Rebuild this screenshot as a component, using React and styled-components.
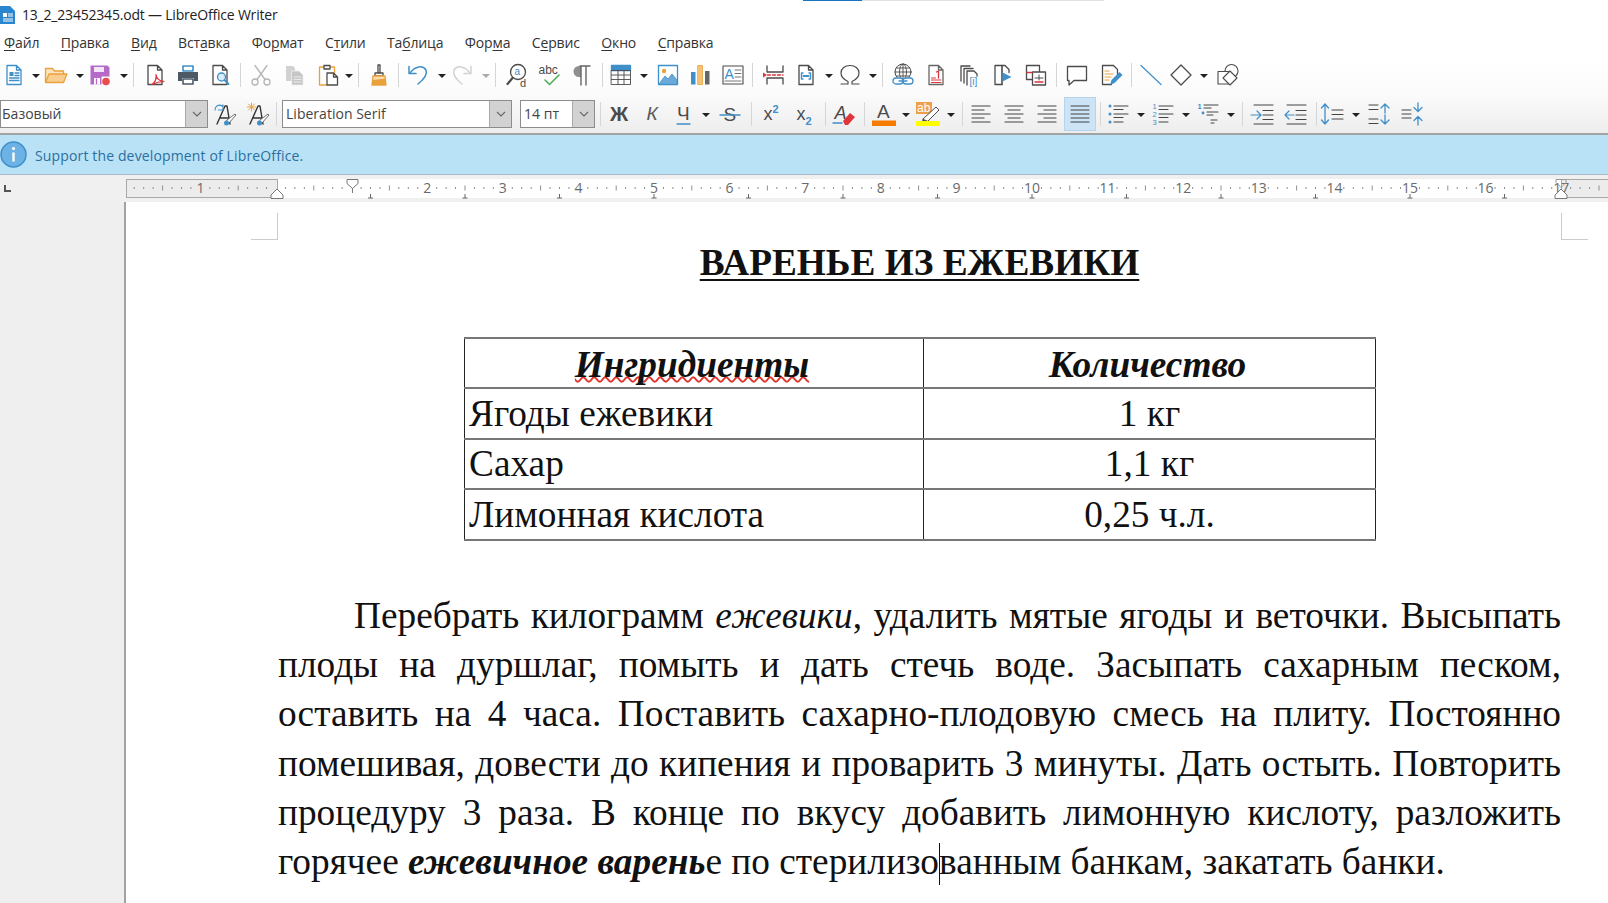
import React from "react";
import styled, { createGlobalStyle } from "styled-components";

const BLUE = "#3f8fc8";
const ORANGE = "#e9a23b";
const DARK = "#4b4b4b";
const RED = "#d9363e";

const GlobalStyle = createGlobalStyle`
  html, body {
    margin: 0;
    padding: 0;
    width: 1608px;
    height: 903px;
    overflow: hidden;
    background: #fff;
  }
`;

const Window = styled.div`
  width: 1608px;
  height: 903px;
  display: flex;
  flex-direction: column;
  overflow: hidden;
  font-family: "Open Sans", "Noto Sans", sans-serif;
  color: #333;
`;

const TopProgress = styled.div`
  height: 1px;
  display: flex;
  padding-left: 803px;
  flex-shrink: 0;
`;

const ProgressPart = styled.div`
  height: 1px;
  width: ${(p) => p.$w}px;
  background: ${(p) => p.$c};
`;

const TitleBar = styled.div`
  height: 28px;
  display: flex;
  align-items: center;
  gap: 7px;
  font-size: 14px;
  letter-spacing: -0.2px;
  color: #222;
  flex-shrink: 0;
  padding-bottom: 1px;
  box-sizing: border-box;
`;

const MenuBar = styled.div`
  height: 28px;
  display: flex;
  align-items: center;
  padding: 0 0 2px 4px;
  box-sizing: border-box;
  gap: 21.5px;
  font-size: 14px;
  letter-spacing: -0.15px;
  color: #333;
  flex-shrink: 0;
  background: #fff;
`;

const MenuItem = styled.span`
  u { text-underline-offset: 2px; text-decoration-thickness: 1px; }
`;

const ToolRow = styled.div`
  height: ${(p) => p.$h}px;
  padding-bottom: ${(p) => p.$pb || 0}px;
  box-sizing: border-box;
  display: flex;
  align-items: center;
  flex-shrink: 0;
  background: linear-gradient(${(p) => p.$from}, ${(p) => p.$to});
`;

const Toolbars = styled.div`
  border-bottom: 2px solid #a3a3a3;
  flex-shrink: 0;
`;

const Tool = styled.div`
  width: 24px;
  height: 24px;
  flex-shrink: 0;
  margin-left: ${(p) => p.$gap}px;
  display: flex;
  align-items: center;
  justify-content: center;
  svg { display: block; }
`;

const ActiveTool = styled(Tool)`
  width: 32px;
  height: 34px;
  background: #cde4f7;
  border: 1px solid #b5d5ee;
  box-sizing: border-box;
`;

const Drop = styled.div`
  width: 0;
  height: 0;
  flex-shrink: 0;
  margin-left: ${(p) => p.$gap}px;
  margin-top: 2px;
  border-left: 4px solid transparent;
  border-right: 4px solid transparent;
  border-top: 4px solid ${(p) => (p.$off ? "#aaa" : "#222")};
`;

const Sep = styled.div`
  width: 1px;
  height: 24px;
  flex-shrink: 0;
  margin-left: ${(p) => p.$gap}px;
  background: #d6d6d6;
`;

const Combo = styled.div`
  height: 28px;
  width: ${(p) => p.$w}px;
  margin-left: ${(p) => p.$gap}px;
  flex-shrink: 0;
  box-sizing: border-box;
  display: flex;
  background: #fff;
  border: 1px solid #8c8c8c;
  font-size: 14px;
  letter-spacing: 0.02px;
  line-height: 26px;
  color: #444;
`;

const ComboText = styled.span`
  flex: 1;
  padding-left: ${(p) => p.$pad}px;
`;

const ComboButton = styled.span`
  width: 21px;
  background: #d2d2d2;
  border-left: 1px solid #aaa;
  display: flex;
  align-items: center;
  justify-content: center;
`;

const Glyph = styled.span`
  font-family: "Liberation Sans", sans-serif;
  font-size: ${(p) => p.$size || 18}px;
  font-weight: ${(p) => (p.$bold ? 700 : 400)};
  font-style: ${(p) => (p.$italic ? "italic" : "normal")};
  color: ${(p) => p.$c || "#4b4b4b"};
  line-height: 1;
  sup, sub { font-size: 11px; color: ${BLUE}; font-weight: 700; line-height: 0; }
`;

const InfoBar = styled.div`
  height: 40px;
  display: flex;
  align-items: center;
  gap: 8px;
  background: #b9e2f6;
  border-bottom: 1px solid #a9bcc6;
  font-size: 14px;
  letter-spacing: 0.14px;
  color: #2b6f9f;
  flex-shrink: 0;
  box-sizing: border-box;
`;

const InfoText = styled.span`
  padding-top: 2px;
`;

const RulerBar = styled.div`
  height: 27px;
  background: #f0f0f0;
  flex-shrink: 0;
  svg { display: block; }
`;

const Workspace = styled.div`
  flex: 1;
  display: flex;
  min-height: 0;
`;

const Gutter = styled.div`
  width: 124px;
  flex-shrink: 0;
  background: #efefef;
  border-right: 2px solid #a2a2a2;
`;

const Page = styled.div`
  flex: 1;
  background: #fff;
  padding: 11px 47px 0 152px;
  font-family: "Liberation Serif", "Times New Roman", serif;
  color: #111;
  overflow: hidden;
`;

const CropRow = styled.div`
  display: flex;
  justify-content: space-between;
  margin: 0 -27px;
`;

const Crop = styled.div`
  width: 27px;
  height: 27px;
  box-sizing: border-box;
  border-bottom: 1px solid #ccc;
  ${(p) => (p.$right ? "border-left: 1px solid #ccc;" : "border-right: 1px solid #ccc;")}
`;

const Title = styled.h1`
  margin: 0;
  padding-top: 2px;
  text-align: center;
  font-size: 37.3px;
  line-height: 42px;
  font-weight: 700;
  text-decoration: underline;
  text-decoration-thickness: 2px;
  text-underline-offset: 4px;
`;

const Recipe = styled.table`
  width: 912px;
  margin: 53px 0 0 186px;
  border-collapse: collapse;
  table-layout: fixed;
  font-size: 37.3px;
  tr:nth-child(odd) > * { height: 50px; }
  tr:nth-child(even) > * { height: 51px; }
`;

const Cell = styled.td`
  padding: ${(p) => (p.$center ? "0" : "0 0 0 4px")};
  line-height: 42px;
  box-sizing: border-box;
  border-top: 2px solid #777;
  border-bottom: 2px solid #777;
  border-left: 1px solid #222;
  border-right: 1px solid #222;
  text-align: ${(p) => (p.$center ? "center" : "left")};
  width: ${(p) => p.$w || "auto"};
`;

const HeadCell = styled(Cell)`
  padding: 4px 4px 0 0;
  font-weight: 700;
  font-style: italic;
  text-align: center;
`;

const Wavy = styled.span`
  text-decoration: underline wavy #e0352b;
  text-decoration-thickness: 1.5px;
  text-decoration-skip-ink: none;
  text-underline-offset: -1px;
`;

const Body = styled.div`
  margin-top: 50px;
  font-size: 37.3px;
  line-height: 49.2px;
`;

const Line = styled.div`
  white-space: nowrap;
  text-align: ${(p) => (p.$last ? "left" : "justify")};
  text-align-last: ${(p) => (p.$last ? "left" : "justify")};
  padding-left: ${(p) => (p.$indent ? 76 : 0)}px;
`;

const Caret = styled.span`
  position: relative;
  &::after {
    content: "";
    position: absolute;
    left: 0;
    top: 2px;
    height: 42px;
    width: 1px;
    background: #111;
  }
`;

const Svg = ({ children, size = 24 }) => (
  <svg width={size} height={size} viewBox="0 0 24 24" fill="none" strokeWidth="1.3" strokeLinecap="round" strokeLinejoin="round">
    {children}
  </svg>
);

function AlignLines({ widths }) {
  return (
    <Svg>
      {widths.map(([a, b], i) => (
        <path key={i} d={`M${a} ${4 + i * 4}H${b}`} stroke="#444" strokeWidth="1.2" />
      ))}
    </Svg>
  );
}

const icons = {
  doc: (
    <Svg>
      <path d="M5 2.5h9.5l4.5 4.5v14.5H5z M14.5 2.5V7H19" stroke={BLUE} fill="#fff" />
      <path d="M7.5 9h4v4h-4z" fill={BLUE} />
      <path d="M13 10h4M13 12.5h4M7.5 15h9.5M7.5 17.5h9.5" stroke={BLUE} />
    </Svg>
  ),
  open: (
    <Svg>
      <path d="M1.5 19V5.5h7l2 2.5h9v3" stroke={ORANGE} fill="#fbe3bf" />
      <path d="M1.5 19.5l3.5-8.5h18l-3.5 8.5z" stroke={ORANGE} fill="#f8cd8f" />
    </Svg>
  ),
  save: (
    <Svg>
      <path d="M2.5 2.5h17l2 2v9h-8v8h-11z" fill="#b56ac8" />
      <path d="M6 4h10v5H6z" fill="#f3e4f7" />
      <path d="M6 15h6v6.5H6z" fill="#fff" />
      <path d="M8.5 16v4.5" stroke="#b56ac8" />
      <circle cx="18" cy="18.5" r="3.8" fill="#ea4c4c" />
    </Svg>
  ),
  pdf: (
    <Svg>
      <path d="M5 2.5h9.5l4.5 4.5v14.5H5z M14.5 2.5V7H19" stroke={DARK} fill="#fff" />
      <path d="M9 21.5c3-2 4.5-6 4-10 .5 4 3 6.5 8 7-4 0-8 1-12 3z" stroke={RED} strokeWidth="1.2" />
    </Svg>
  ),
  print: (
    <Svg>
      <path d="M7 3h10v5H7z" fill="#fff" stroke={BLUE} strokeWidth="1.6" />
      <path d="M2 9h20v9h-4v-3H6v3H2z" fill="#4d5a66" />
      <path d="M7 16h10v5H7z" fill="#fff" stroke="#4d5a66" strokeWidth="1.6" />
    </Svg>
  ),
  preview: (
    <Svg>
      <path d="M5 2.5h9.5l4.5 4.5v14.5H5z M14.5 2.5V7H19" stroke={DARK} fill="#fff" />
      <circle cx="13.5" cy="14" r="4" stroke={BLUE} fill="#d9ecf9" />
      <path d="M16.5 17l4 4" stroke={BLUE} strokeWidth="1.8" />
    </Svg>
  ),
  cut: (
    <Svg>
      <path d="M6 2.5l10 14M18 2.5L8 16.5" stroke="#b5b5b5" />
      <circle cx="6" cy="19" r="3" stroke="#b5b5b5" />
      <circle cx="18" cy="19" r="3" stroke="#b5b5b5" />
    </Svg>
  ),
  copy: (
    <Svg>
      <path d="M4 3h7l2 2v13H4z" fill="#d2d2d2" />
      <path d="M10 8h7l4 4v10H10z" fill="#c6c6c6" stroke="#eee" strokeWidth="0.8" />
      <path d="M12 14h7M12 16.5h7M12 19h7" stroke="#f0f0f0" strokeWidth="0.9" />
    </Svg>
  ),
  paste: (
    <Svg>
      <path d="M8 4H3.5v18H11" stroke={ORANGE} />
      <path d="M14 4h4.5v6" stroke={ORANGE} />
      <path d="M8 2.5h6V6H8z" stroke={DARK} fill="#fff" />
      <path d="M11 10h6.5l4 4v8H11z M17.5 10v4h4" stroke={DARK} fill="#fff" />
    </Svg>
  ),
  brush: (
    <Svg>
      <path d="M11 2h2v8h-2z" stroke={DARK} fill="#fff" />
      <path d="M8 10h8v3H8z" stroke={DARK} fill="#fff" />
      <path d="M6 13h12l1 9H5z" stroke={ORANGE} fill="#fcdcae" />
      <path d="M5.5 17l13-1.5.5 6.5H5z" fill={ORANGE} />
    </Svg>
  ),
  undo: (
    <Svg>
      <path d="M4 10c5-7 13-8 16-3 2 5-3 10-8 14" stroke={BLUE} strokeWidth="1.5" />
      <path d="M3 3.5V10.5h7" stroke={BLUE} strokeWidth="1.5" />
    </Svg>
  ),
  redo: (
    <Svg>
      <path d="M20 10c-5-7-13-8-16-3-2 5 3 10 8 14" stroke="#d2d2d2" strokeWidth="1.5" />
      <path d="M21 3.5V10.5h-7" stroke="#d2d2d2" strokeWidth="1.5" />
    </Svg>
  ),
  find: (
    <Svg>
      <circle cx="12" cy="9" r="7.5" stroke={DARK} />
      <path d="M6.5 15L1.5 21" stroke={DARK} strokeWidth="2.2" />
      <text x="8.5" y="12" fontSize="10" fontFamily="Liberation Sans" fill={BLUE}>a</text>
      <text x="14" y="23.5" fontSize="11" fontFamily="Liberation Sans" fill={DARK}>d</text>
    </Svg>
  ),
  spell: (
    <Svg>
      <text x="0.5" y="11" fontSize="12" fontFamily="Liberation Sans" fill={DARK}>abc</text>
      <path d="M7 17l4.5 4.5L21 12" stroke="#4fae5b" strokeWidth="1.6" />
    </Svg>
  ),
  pilcrow: (
    <Svg>
      <path d="M11 3H9a5.5 5.5 0 0 0 0 11h2z" fill="#8f8f8f" />
      <path d="M11 3v19M16 3v19M10 3h10" stroke="#666" strokeWidth="1.4" />
    </Svg>
  ),
  table: (
    <Svg>
      <path d="M2.5 2.5h19v5h-19z" fill={BLUE} stroke={BLUE} />
      <path d="M2.5 7.5h19v14h-19z M2.5 12h19M2.5 16.5h19M9 7.5v14M15 7.5v14" stroke={DARK} strokeWidth="0.9" />
    </Svg>
  ),
  image: (
    <Svg>
      <path d="M2.5 2.5h19v19h-19z" stroke={BLUE} fill="#fff" />
      <circle cx="8" cy="8" r="2.2" fill={ORANGE} />
      <path d="M3 21l6-8 3 3 4-5 5 6v4z" fill="#6aa9d8" stroke={BLUE} strokeWidth="0.8" />
    </Svg>
  ),
  chart: (
    <Svg>
      <path d="M3 9h4.5v12.5H3z" fill={BLUE} />
      <path d="M10 2.5h4.5v19H10z" fill="#f5c27a" stroke={ORANGE} strokeWidth="0.8" />
      <path d="M17 8h4.5v13.5H17z" fill="#666" />
    </Svg>
  ),
  textbox: (
    <Svg>
      <path d="M2 3h20v18H2z" stroke={DARK} strokeWidth="1.1" fill="#fff" />
      <text x="3.5" y="16" fontSize="14" fontFamily="Liberation Sans" fill={BLUE}>A</text>
      <path d="M14 7h6M14 10.5h6M14 14h6M4 18h16" stroke="#777" strokeWidth="1" />
    </Svg>
  ),
  pagebreak: (
    <Svg>
      <path d="M5 3v6h16V3M5 21v-6h16v6" stroke={DARK} />
      <path d="M5.5 12H21" stroke={RED} strokeDasharray="3 2" />
      <path d="M1 9.5l4 2.5-4 2.5z" fill={RED} />
    </Svg>
  ),
  field: (
    <Svg>
      <path d="M5 2.5h9.5l4.5 4.5v14.5H5z M14.5 2.5V7H19" stroke={DARK} fill="#fff" />
      <path d="M9 10H7.5v6H9M15 10h1.5v6H15" stroke={BLUE} strokeWidth="1.4" />
      <path d="M9.5 13h5" stroke={BLUE} strokeWidth="2" />
    </Svg>
  ),
  omega: (
    <Svg>
      <path d="M3 21h7v-2.5C5.5 16.5 3 13.5 3 10c0-4.5 4-7.5 9-7.5s9 3 9 7.5c0 3.5-2.5 6.5-7 8.5V21h7" stroke={DARK} strokeWidth="1.2" />
    </Svg>
  ),
  link: (
    <Svg>
      <circle cx="12" cy="9" r="8" stroke={DARK} strokeWidth="1" />
      <path d="M4 9h16M12 1v16M5.5 5h13M5.5 13h13" stroke={DARK} strokeWidth="0.9" />
      <ellipse cx="12" cy="9" rx="3.5" ry="8" stroke={DARK} strokeWidth="0.9" />
      <rect x="2" y="15" width="10" height="6" rx="3" stroke={BLUE} fill="#fff" />
      <rect x="12" y="15" width="10" height="6" rx="3" stroke={BLUE} fill="#fff" />
      <path d="M8 18h8" stroke={BLUE} />
    </Svg>
  ),
  footnote: (
    <Svg>
      <path d="M5 2.5h9.5l4.5 4.5v14.5H5z M14.5 2.5V7H19" stroke="#666" fill="#fff" />
      <path d="M12.5 9l2-1v7" stroke={RED} />
      <path d="M7.5 15h4M7.5 17h9.5M7.5 19.5h9.5" stroke={RED} strokeWidth="1" />
    </Svg>
  ),
  endnote: (
    <Svg>
      <path d="M3 18V3h9" stroke={DARK} />
      <path d="M6 20V5.5h9" stroke={DARK} />
      <path d="M9 22V8h7l3 3v2" stroke={DARK} fill="#fff" />
      <text x="11.5" y="22" fontSize="10" fontFamily="Liberation Sans" fill={BLUE}>[i]</text>
    </Svg>
  ),
  bookmark: (
    <Svg>
      <path d="M4 2.5h10l4 4v3M4 2.5v19h7" stroke={DARK} />
      <path d="M11 2.5v19" stroke={DARK} strokeWidth="1.6" />
      <path d="M11.5 9.5l9 4.5-9 4.5z" fill={BLUE} />
    </Svg>
  ),
  xref: (
    <Svg>
      <path d="M2.5 2.5h13v14h-13z" stroke={DARK} fill="#fff" />
      <path d="M8.5 9h13v13h-13z" stroke={DARK} fill="#fff" />
      <path d="M3 9.5h5" stroke={RED} />
      <path d="M11 15h8M15 17v-5" stroke={DARK} strokeWidth="1" />
      <path d="M11 19h8" stroke={RED} />
    </Svg>
  ),
  comment: (
    <Svg>
      <path d="M2.5 3.5h19v14H9l-5 4.5v-4.5H2.5z" stroke={DARK} fill="#fff" />
    </Svg>
  ),
  track: (
    <Svg>
      <path d="M3.5 2.5h11l4 4v6M3.5 2.5v19h9" stroke={DARK} fill="#fff" />
      <path d="M6 8h4M6 11h8M6 14h6M6 17h4" stroke={ORANGE} strokeWidth="1.2" />
      <path d="M11 22l1.5-5 8-8 3 3-8 8z" fill={BLUE} />
    </Svg>
  ),
  line: (
    <Svg>
      <path d="M2 2.5l20 19" stroke={BLUE} strokeWidth="1.2" />
    </Svg>
  ),
  diamond: (
    <Svg>
      <path d="M12 2l10 10-10 10L2 12z" stroke={DARK} fill="#fff" />
    </Svg>
  ),
  shapes: (
    <Svg>
      <circle cx="15.5" cy="8" r="6.5" stroke={DARK} strokeWidth="1.1" />
      <path d="M2 8.5h12v12.5H2z" stroke={DARK} fill="#fff" strokeWidth="1.1" />
      <path d="M14 8l7 7-7 7-7-7z" stroke={DARK} fill="#fff" strokeWidth="1.1" />
    </Svg>
  ),
  styleUpdate: (
    <Svg>
      <path d="M4 22L12 4h2l3 18M7 16h9" stroke="#333" strokeWidth="1.4" />
      <path d="M2 8a4.5 4.5 0 0 1 7-4l1-1v5H5.5" stroke={BLUE} strokeWidth="1.1" />
      <path d="M16 21l7-8-1-1-8 6z" fill="#fff" stroke={DARK} strokeWidth="0.8" />
      <circle cx="13.5" cy="21" r="2.5" fill={BLUE} />
    </Svg>
  ),
  styleNew: (
    <Svg>
      <path d="M4 22L12 4h2l3 18M7 16h9" stroke="#333" strokeWidth="1.4" />
      <path d="M5.5 1v8M1.5 5h8M2.5 2l6 6M8.5 2l-6 6" stroke={ORANGE} strokeWidth="1" />
      <path d="M16 21l7-8-1-1-8 6z" fill="#fff" stroke={DARK} strokeWidth="0.8" />
      <circle cx="13.5" cy="21" r="2.5" fill={BLUE} />
    </Svg>
  ),
  bold: <Glyph $bold $size={20}>Ж</Glyph>,
  italic: <Glyph $italic $size={19} $c="#5a5a5a">К</Glyph>,
  under: (
    <Svg>
      <text x="5" y="18" fontSize="19" fontFamily="Liberation Sans" fill={DARK}>Ч</text>
      <path d="M5 22h13" stroke={BLUE} strokeWidth="1.4" />
    </Svg>
  ),
  strike: (
    <Svg>
      <text x="5.5" y="19" fontSize="19" fontFamily="Liberation Sans" fill={DARK}>S</text>
      <path d="M2 13h20" stroke={BLUE} strokeWidth="1.4" />
    </Svg>
  ),
  sup: <Glyph $size={18}>x<sup>2</sup></Glyph>,
  sub: <Glyph $size={18}>x<sub>2</sub></Glyph>,
  clear: (
    <Svg>
      <text x="2.5" y="17" fontSize="18" fontStyle="italic" fontFamily="Liberation Sans" fill={DARK}>A</text>
      <path d="M1 21h9" stroke={BLUE} strokeWidth="1.4" />
      <path d="M11 19l7-8 5 4-7 8h-3z" fill="#e0353b" />
    </Svg>
  ),
  fontColor: (
    <Svg>
      <text x="5" y="16" fontSize="19" fontFamily="Liberation Sans" fill={DARK}>A</text>
      <path d="M0 18.5h24V24H0z" fill="#f57c00" />
    </Svg>
  ),
  highlight: (
    <Svg>
      <path d="M0 0h16v12H0z" fill="#ee9f4a" />
      <text x="1" y="10" fontSize="12" fontFamily="Liberation Sans" fill="#fff">ab</text>
      <path d="M7 17l13-12 3 3-11 11z" fill="#fff" stroke={DARK} strokeWidth="1" />
      <path d="M7 17l-1 2h4z" fill={DARK} />
      <path d="M0 19h24v5H0z" fill="#ffff00" />
    </Svg>
  ),
  alignLeft: <AlignLines widths={[[3, 21], [3, 15], [3, 21], [3, 15], [3, 21]]} />,
  alignCenter: <AlignLines widths={[[3, 21], [6, 18], [3, 21], [6, 18], [3, 21]]} />,
  alignRight: <AlignLines widths={[[3, 21], [9, 21], [3, 21], [9, 21], [3, 21]]} />,
  justify: <AlignLines widths={[[3, 21], [3, 21], [3, 21], [3, 21], [3, 21]]} />,
  bullets: (
    <Svg>
      <path d="M7 4h14M7 7.5h9M7 12h14M7 15.5h9M7 20h9" stroke="#444" strokeWidth="1.1" />
      <circle cx="3" cy="4" r="1.5" fill={BLUE} />
      <circle cx="3" cy="12" r="1.5" fill={BLUE} />
      <circle cx="3" cy="20" r="1.5" fill={BLUE} />
    </Svg>
  ),
  numbers: (
    <Svg>
      <path d="M7 4h14M7 7.5h9M7 12h14M7 15.5h9M7 20h9" stroke="#444" strokeWidth="1.1" />
      <text x="0.5" y="7" fontSize="7.5" fontFamily="Liberation Sans" fill={BLUE}>1</text>
      <text x="0.5" y="15" fontSize="7.5" fontFamily="Liberation Sans" fill={BLUE}>2</text>
      <text x="0.5" y="23" fontSize="7.5" fontFamily="Liberation Sans" fill={BLUE}>3</text>
    </Svg>
  ),
  outline: (
    <Svg>
      <path d="M7 3h14M7 6h7M10 10h11M10 13h6M14 18h6M14 21h3" stroke="#444" strokeWidth="1.1" />
      <text x="0.5" y="7" fontSize="7.5" fontWeight="700" fontFamily="Liberation Sans" fill={BLUE}>1</text>
      <circle cx="6" cy="11" r="1.4" fill={BLUE} />
    </Svg>
  ),
  indentMore: (
    <Svg>
      <path d="M4 3h19M13 8.5h10M13 13h10M13 17.5h10M4 22h19" stroke="#444" strokeWidth="1.1" />
      <path d="M1 13h9M7 9l4 4-4 4" stroke={BLUE} strokeWidth="1.2" />
    </Svg>
  ),
  indentLess: (
    <Svg>
      <path d="M4 3h19M13 8.5h10M13 13h10M13 17.5h10M4 22h19" stroke="#444" strokeWidth="1.1" />
      <path d="M11 13H2M6 9l-4 4 4 4" stroke={BLUE} strokeWidth="1.2" />
    </Svg>
  ),
  spacing: (
    <Svg>
      <path d="M12 8h11M12 12.5h11M12 17h11" stroke="#444" strokeWidth="1.1" />
      <path d="M5 2v20M1.5 6L5 2l3.5 4M1.5 18L5 22l3.5-4" stroke={BLUE} strokeWidth="1.3" />
    </Svg>
  ),
  incSpace: (
    <Svg>
      <path d="M1 3h9M1 7.5h9M1 17h9M1 21.5h9" stroke="#444" strokeWidth="1.1" />
      <path d="M17 11V2M13 6l4-4 4 4M17 13v9M13 18l4 4 4-4" stroke={BLUE} strokeWidth="1.3" />
    </Svg>
  ),
  decSpace: (
    <Svg>
      <path d="M1 8h9M1 12h9M1 16h9" stroke="#444" strokeWidth="1.1" />
      <path d="M17 1v8M13 5.5L17 9.5l4-4M17 23v-8M13 18.5l4-4 4 4" stroke={BLUE} strokeWidth="1.3" />
    </Svg>
  ),
};

// [kind, centre x] for every item on a toolbar row
const row1 = [
  ["doc", 14], ["d", 36], ["open", 56], ["d", 80], ["save", 100], ["d", 124], ["s", 133],
  ["pdf", 155], ["print", 188], ["preview", 220], ["s", 240], ["cut", 261], ["copy", 294],
  ["paste", 328], ["d", 349], ["s", 358], ["brush", 379], ["s", 398], ["undo", 418], ["d", 442],
  ["redo", 462], ["do", 486], ["s", 495], ["find", 518], ["spell", 550], ["pilcrow", 582],
  ["s", 602], ["table", 621], ["d", 644], ["image", 668], ["chart", 700], ["textbox", 733],
  ["s", 752], ["pagebreak", 774], ["field", 806], ["d", 829], ["omega", 850], ["d", 873],
  ["s", 882], ["link", 903], ["footnote", 936], ["endnote", 970], ["bookmark", 1003],
  ["xref", 1036], ["s", 1056], ["comment", 1077], ["track", 1111], ["s", 1131], ["line", 1151],
  ["diamond", 1181], ["d", 1204], ["shapes", 1228],
];

const row2 = [
  ["styleUpdate", 225], ["styleNew", 258], ["s", 276],
];

const row2b = [
  ["s", 600], ["bold", 619], ["italic", 652], ["under", 684], ["d", 706], ["strike", 730],
  ["s", 751], ["sup", 771], ["sub", 804], ["s", 825], ["clear", 844], ["s", 864],
  ["fontColor", 884], ["d", 906], ["highlight", 928], ["d", 951], ["s", 962], ["alignLeft", 981],
  ["alignCenter", 1014], ["alignRight", 1047], ["justify", 1080], ["s", 1100], ["bullets", 1119],
  ["d", 1141], ["numbers", 1164], ["d", 1186], ["outline", 1209], ["d", 1231], ["s", 1242],
  ["indentMore", 1262], ["indentLess", 1295], ["s", 1316], ["spacing", 1332], ["d", 1356],
  ["incSpace", 1380], ["decSpace", 1413],
];

// turns centre positions into left gaps, so that the row stays plain flex flow
function renderTools(items, startX) {
  let edge = startX;
  return items.map(([kind, x], i) => {
    const isDrop = kind === "d" || kind === "do";
    const own = isDrop ? 8 : kind === "s" ? 1 : kind === "justify" ? 32 : 24;
    const left = Math.round(x - own / 2);
    const gap = left - edge;
    edge = left + own;
    if (isDrop) return <Drop key={i} $gap={gap} $off={kind === "do"} />;
    if (kind === "s") return <Sep key={i} $gap={gap} />;
    if (kind === "justify") return <ActiveTool key={i} $gap={gap}>{icons[kind]}</ActiveTool>;
    return <Tool key={i} $gap={gap}>{icons[kind]}</Tool>;
  });
}

const ChevronDown = () => (
  <svg width="10" height="6" viewBox="0 0 10 6" fill="none">
    <path d="M1 1l4 4 4-4" stroke="#666" strokeWidth="1.1" />
  </svg>
);

const RULER_ZERO = 276;
const CM = 75.6;

function RulerDrawing() {
  const ticks = [];
  for (let k = -15; k < 23 * 8; k++) {
    if (k % 8 === 0) continue;
    const x = RULER_ZERO + (k * CM) / 8;
    const len = k % 4 === 0 ? 5 : 2;
    ticks.push(<path key={"t" + k} d={`M${x} ${13 - len / 2}v${len}`} stroke="#8f8f8f" strokeWidth="1" />);
  }
  const labels = [[-1, "1"]];
  for (let n = 2; n <= 17; n++) labels.push([n, String(n)]);
  const tabs = [];
  for (let k = 1; k <= 13; k++) {
    const x = RULER_ZERO + 94.5 * k;
    tabs.push(<path key={k} d={`M${x} 19v4M${x - 2.5} 23h5`} stroke="#666" strokeWidth="1" />);
  }
  return (
    <svg width="1608" height="27" viewBox="0 0 1608 27">
      <rect x="126" y="4" width="1482" height="19" fill="#fff" />
      <rect x="126.5" y="4.5" width="151" height="18" fill="#ececec" stroke="#a8a8a8" />
      <rect x="1561.5" y="4.5" width="50" height="18" fill="#ececec" stroke="#a8a8a8" />
      {ticks}
      {labels.map(([n, t]) => (
        <text key={n} x={RULER_ZERO + n * CM} y="18" textAnchor="middle" fontSize="14" fontFamily="Open Sans" fill="#6a6a6a">{t}</text>
      ))}
      {tabs}
      <path d="M347 4.5h11v4l-5.5 5-5.5-5z" fill="#fff" stroke="#777" />
      <path d="M352.5 13v5" stroke="#777" />
      <path d="M271 23.5v-3.5l6-6 6 6v3.5z" fill="#fff" stroke="#777" />
      <path d="M1555 23.5v-3.5l6-6 6 6v3.5z" fill="#fff" stroke="#777" />
      <path d="M1556 4.5h10v3l-5 5-5-5z" fill="none" stroke="#999" />
      <path d="M5 10v6h6" stroke="#555" strokeWidth="2" fill="none" />
    </svg>
  );
}

const menu = [
  ["Ф", "айл", ""], ["П", "равка", ""], ["В", "ид", ""], ["Вст", "а", "вка"], ["Фо", "р", "мат"],
  ["С", "т", "или"], ["Та", "б", "лица"], ["Фор", "м", "а"], ["С", "е", "рвис"], ["О", "кно", ""], ["С", "правка", ""],
];

function MenuLabel({ parts, first }) {
  const [a, b, c] = parts;
  if (first) return <MenuItem><u>{a}</u>{b}{c}</MenuItem>;
  return <MenuItem>{a}<u>{b}</u>{c}</MenuItem>;
}

export default function App() {
  return (
    <>
      <GlobalStyle />
      <Window>
        <TopProgress>
          <ProgressPart $w={59} $c="#1a73c0" />
          <ProgressPart $w={242} $c="#e2e2e2" />
        </TopProgress>
        <TitleBar>
          <svg width="15" height="18" viewBox="0 0 15 18">
            <path d="M0 0h10l5 5v13H0z" fill="#2a86cf" />
            <path d="M3 7h4v4H3z" fill="#fff" />
            <path d="M8 8h5M8 10h5M3 13h10M3 15h10" stroke="#fff" strokeWidth="1" />
          </svg>
          13_2_23452345.odt — LibreOffice Writer
        </TitleBar>
        <MenuBar>
          {menu.map((m, i) => (
            <MenuLabel key={i} parts={m} first={m[2] === ""} />
          ))}
        </MenuBar>
        <Toolbars>
          <ToolRow $h={37} $pb={2} $from="#ffffff" $to="#fbfbfb">{renderTools(row1, 0)}</ToolRow>
          <ToolRow $h={39} $from="#fbfbfb" $to="#ededed">
            <Combo $w={208} $gap={0}>
              <ComboText $pad={1}>Базовый</ComboText>
              <ComboButton><ChevronDown /></ComboButton>
            </Combo>
            {renderTools(row2, 208)}
            <Combo $w={230} $gap={5}>
              <ComboText $pad={3}>Liberation Serif</ComboText>
              <ComboButton><ChevronDown /></ComboButton>
            </Combo>
            <Combo $w={75} $gap={8}>
              <ComboText $pad={3}>14 пт</ComboText>
              <ComboButton><ChevronDown /></ComboButton>
            </Combo>
            {renderTools(row2b, 595)}
          </ToolRow>
        </Toolbars>
        <InfoBar>
          <svg width="27" height="27" viewBox="0 0 27 27">
            <circle cx="13.5" cy="13.5" r="12.5" fill="#6cb2e4" stroke="#3d8fcb" strokeWidth="1.5" />
            <circle cx="13.5" cy="7.5" r="1.6" fill="#fff" />
            <path d="M13.5 11.5v9" stroke="#fff" strokeWidth="2.4" />
          </svg>
          <InfoText>Support the development of LibreOffice.</InfoText>
        </InfoBar>
        <RulerBar><RulerDrawing /></RulerBar>
        <Workspace>
          <Gutter />
          <Page>
            <CropRow>
              <Crop />
              <Crop $right />
            </CropRow>
            <Title>ВАРЕНЬЕ ИЗ ЕЖЕВИКИ</Title>
            <Recipe>
              <tbody>
                <tr>
                  <HeadCell as="th" $w="459px"><Wavy>Ингридиенты</Wavy></HeadCell>
                  <HeadCell as="th">Количество</HeadCell>
                </tr>
                <tr><Cell>Ягоды ежевики</Cell><Cell $center>1 кг</Cell></tr>
                <tr><Cell>Сахар</Cell><Cell $center>1,1 кг</Cell></tr>
                <tr><Cell>Лимонная кислота</Cell><Cell $center>0,25 ч.л.</Cell></tr>
              </tbody>
            </Recipe>
            <Body>
              <Line $indent>Перебрать килограмм <i>ежевики</i>, удалить мятые ягоды и веточки. Высыпать</Line>
              <Line>плоды на дуршлаг, помыть и дать стечь воде. Засыпать сахарным песком,</Line>
              <Line>оставить на 4 часа. Поставить сахарно-плодовую смесь на плиту. Постоянно</Line>
              <Line>помешивая, довести до кипения и проварить 3 минуты. Дать остыть. Повторить</Line>
              <Line>процедуру 3 раза. В конце по вкусу добавить лимонную кислоту, разложить</Line>
              <Line $last>горячее <b><i>ежевичное варень</i></b>е по стерилизо<Caret />ванным банкам, закатать банки.</Line>
            </Body>
          </Page>
        </Workspace>
      </Window>
    </>
  );
}
